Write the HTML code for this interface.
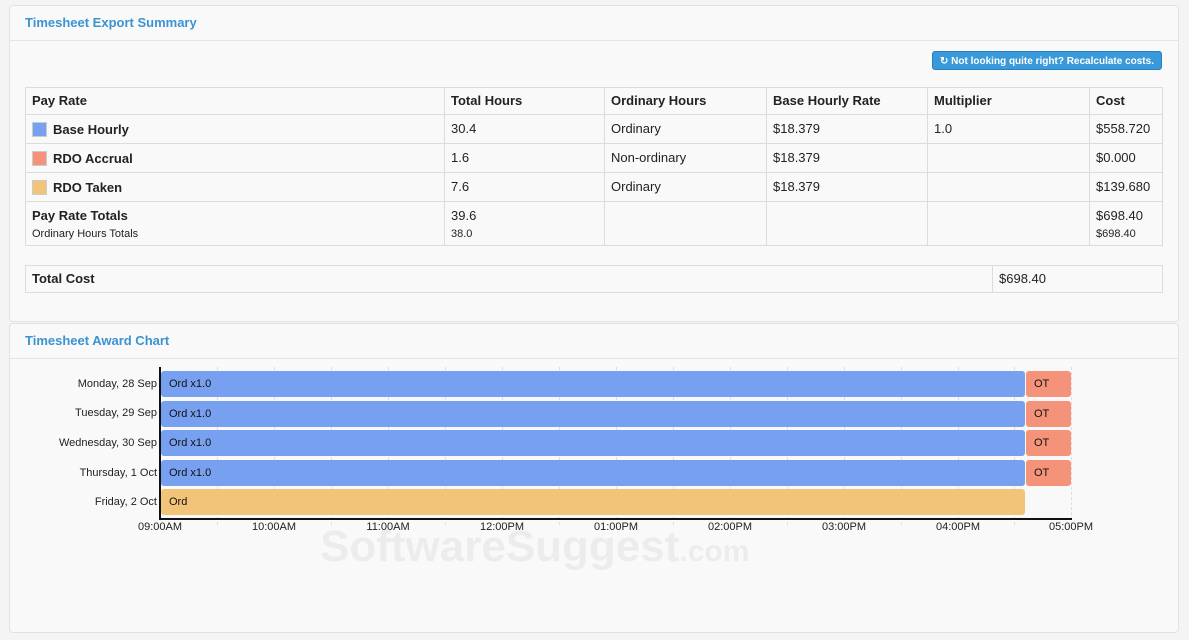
<!DOCTYPE html>
<html><head><meta charset="utf-8"><style>
body{margin:0;width:1189px;height:640px;background:#f4f4f4;font-family:"Liberation Sans",sans-serif;color:#222;position:relative;overflow:hidden}
.panel{position:absolute;left:9px;width:1168px;background:#f9f9f9;border:1px solid #e2e2e2;border-radius:4px}
.ph{height:34px;border-bottom:1px solid #e4e4e4;color:#3a93d2;font-weight:bold;font-size:13px;line-height:34px;padding-left:15px}
table{position:absolute;border-collapse:collapse;font-size:13px;background:#f9f9f9;table-layout:fixed}
td{border:1px solid #dcdcdc;padding:0 6px;vertical-align:top;white-space:nowrap}
.sw{display:inline-block;width:15px;height:15px;vertical-align:-3px;margin-right:6px;border:1px solid #ccc;box-sizing:border-box}
.btn{position:absolute;left:932px;top:51px;width:230px;height:19px;background:#3a9ad9;border:1px solid #2a7fc0;border-radius:3px;color:#fff;font-size:10px;font-weight:bold;line-height:19px;text-align:center;box-sizing:border-box}
.bar{position:absolute;height:26px;border-radius:3px;font-size:11px;line-height:26px;padding-left:8px;box-sizing:border-box;color:#111}
.b{background:#78a0f0}.o{background:#f5937a}.y{background:#f2c47a}
.lbl{position:absolute;right:1032px;font-size:11px;line-height:26px;white-space:nowrap}
.tk{position:absolute;top:521px;font-size:11px;width:80px;margin-left:-40px;text-align:center}
.gl{position:absolute;top:367px;height:158px;border-left:1px dashed #ddd}
.r td{line-height:27px}
.r td.f{line-height:27px;padding-top:1px}
</style></head><body>
<div class="panel" style="top:5px;height:315px">
<div class="ph">Timesheet Export Summary</div>
</div>
<div class="btn">&#x21bb; Not looking quite right? Recalculate costs.</div>
<table style="left:25px;top:87px;width:1138px">
<colgroup><col style="width:419px"><col style="width:160px"><col style="width:162px"><col style="width:161px"><col style="width:162px"><col></colgroup>
<tr style="font-weight:bold"><td style="line-height:26px">Pay Rate</td><td style="line-height:26px">Total Hours</td><td style="line-height:26px">Ordinary Hours</td><td style="line-height:26px">Base Hourly Rate</td><td style="line-height:26px">Multiplier</td><td style="line-height:26px">Cost</td></tr>
<tr class="r"><td class="f"><span class="sw" style="background:#78a0f0"></span><b>Base Hourly</b></td><td>30.4</td><td>Ordinary</td><td>$18.379</td><td>1.0</td><td>$558.720</td></tr>
<tr class="r"><td class="f"><span class="sw" style="background:#f5937a"></span><b>RDO Accrual</b></td><td>1.6</td><td>Non-ordinary</td><td>$18.379</td><td></td><td>$0.000</td></tr>
<tr class="r"><td class="f"><span class="sw" style="background:#f2c47a"></span><b>RDO Taken</b></td><td>7.6</td><td>Ordinary</td><td>$18.379</td><td></td><td>$139.680</td></tr>
<tr style="height:44px"><td style="padding-top:5px;line-height:17px"><b>Pay Rate Totals</b><br><span style="font-size:11px">Ordinary Hours Totals</span></td><td style="padding-top:5px;line-height:17px">39.6<br><span style="font-size:11px">38.0</span></td><td></td><td></td><td></td><td style="padding-top:5px;line-height:17px">$698.40<br><span style="font-size:11px">$698.40</span></td></tr>
</table>
<table style="left:25px;top:265px;width:1138px"><colgroup><col style="width:967px"><col></colgroup><tr><td style="line-height:26px;font-weight:bold">Total Cost</td><td style="line-height:26px">$698.40</td></tr></table>
<div class="panel" style="top:323px;height:308px">
<div class="ph">Timesheet Award Chart</div>
</div>
<div class="gl" style="left:217px"></div><div class="gl" style="left:274px"></div><div class="gl" style="left:331px"></div><div class="gl" style="left:388px"></div><div class="gl" style="left:445px"></div><div class="gl" style="left:502px"></div><div class="gl" style="left:559px"></div><div class="gl" style="left:616px"></div><div class="gl" style="left:673px"></div><div class="gl" style="left:730px"></div><div class="gl" style="left:787px"></div><div class="gl" style="left:844px"></div><div class="gl" style="left:901px"></div><div class="gl" style="left:958px"></div><div class="gl" style="left:1014px"></div><div class="gl" style="left:1071px"></div>
<div style="position:absolute;left:320px;top:522px;font-size:44px;font-weight:bold;color:rgba(0,0,0,0.05);white-space:nowrap">SoftwareSuggest<span style="font-size:30px">.com</span></div>
<div style="position:absolute;left:159px;top:367px;width:2px;height:153px;background:#111"></div>
<div style="position:absolute;left:159px;top:518px;width:913px;height:2px;background:#111"></div>
<div class="lbl" style="top:371px">Monday, 28 Sep</div>
<div class="lbl" style="top:400px">Tuesday, 29 Sep</div>
<div class="lbl" style="top:430px">Wednesday, 30 Sep</div>
<div class="lbl" style="top:460px">Thursday, 1 Oct</div>
<div class="lbl" style="top:489px">Friday, 2 Oct</div>
<div class="bar b" style="left:161px;top:371px;width:864px">Ord x1.0</div><div class="bar o" style="left:1026px;top:371px;width:45px">OT</div>
<div class="bar b" style="left:161px;top:401px;width:864px">Ord x1.0</div><div class="bar o" style="left:1026px;top:401px;width:45px">OT</div>
<div class="bar b" style="left:161px;top:430px;width:864px">Ord x1.0</div><div class="bar o" style="left:1026px;top:430px;width:45px">OT</div>
<div class="bar b" style="left:161px;top:460px;width:864px">Ord x1.0</div><div class="bar o" style="left:1026px;top:460px;width:45px">OT</div>
<div class="bar y" style="left:161px;top:489px;width:864px">Ord</div>
<div class="tk" style="left:160px">09:00AM</div><div class="tk" style="left:274px">10:00AM</div><div class="tk" style="left:388px">11:00AM</div><div class="tk" style="left:502px">12:00PM</div><div class="tk" style="left:616px">01:00PM</div><div class="tk" style="left:730px">02:00PM</div><div class="tk" style="left:844px">03:00PM</div><div class="tk" style="left:958px">04:00PM</div><div class="tk" style="left:1071px">05:00PM</div>
</body></html>
